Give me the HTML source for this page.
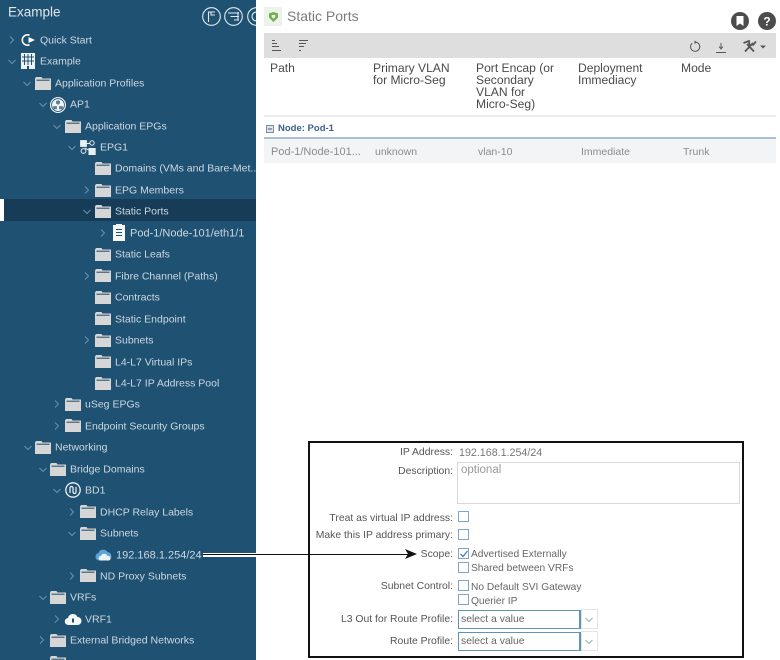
<!DOCTYPE html>
<html><head><meta charset="utf-8"><style>
html,body{margin:0;padding:0;background:#fff}
#p{position:relative;width:780px;height:660px;overflow:hidden;background:#fff;font-family:"Liberation Sans",sans-serif}
#s{position:absolute;left:0;top:0;width:256px;height:660px;background:#1f5172;overflow:hidden}
.t{position:absolute;color:#ccd8e1;font-size:10.5px;line-height:14px;white-space:nowrap;transform:translateY(-6.5px)}
svg{position:absolute;overflow:visible}
.h{position:absolute;font-size:12.1px;line-height:12px;color:#4a4a4a;top:62px;white-space:nowrap}
.c{position:absolute;font-size:10.5px;line-height:12px;color:#8b8b8b;top:145.5px;white-space:nowrap}
.l{position:absolute;right:327px;font-size:10.4px;line-height:12px;color:#555;white-space:nowrap;transform:translateY(-5px)}
.o{position:absolute;left:471px;font-size:10.2px;line-height:12px;color:#666;white-space:nowrap;transform:translateY(-5px)}
.b{position:absolute;left:458px;width:9px;height:9px;border:1px solid #7fa6c8;background:#fff}
.sel{position:absolute;left:458px;width:120px;height:17px;border:1px solid #5f94b5;border-width:1px 2px 1px 1px;font-size:10.4px;line-height:18px;color:#666;text-indent:2px;background:#fff}
.btn{position:absolute;left:581px;width:15px;height:18px;border:1px solid #e4e4e4;background:#fff}
</style></head><body><div id="p">
<svg width="0" height="0" style="position:absolute"><defs>
<symbol id="f" viewBox="0 0 16 13"><path d="M0 1.5 V13 H16 V1.5 H7.5 L6.5 0 H1 Z" fill="#d6d6d6"/><rect x="1.5" y="2.6" width="13" height="1.3" fill="#4a6a82"/></symbol>
<symbol id="r" viewBox="0 0 6 8"><path d="M1 .5 L4.5 4 L1 7.5" fill="none" stroke="#6d91aa" stroke-width="1"/></symbol>
<symbol id="d" viewBox="0 0 8 6"><path d="M.5 1 L4 4.5 L7.5 1" fill="none" stroke="#6d91aa" stroke-width="1"/></symbol>
<symbol id="g" viewBox="0 0 8 6"><path d="M.5 1 L4 4.5 L7.5 1" fill="none" stroke="#8fb0c8" stroke-width="1"/></symbol>
</defs></svg>
<div id="s">
<div style="position:absolute;left:0;top:199px;width:256px;height:22px;background:#163c58"></div>
<div style="position:absolute;left:0;top:199px;width:4px;height:22px;background:#fff"></div>
<div class="t" style="left:8px;top:12px;font-size:13.5px;color:#dfe7ec">Example</div>

<svg style="left:202px;top:7px" width="54" height="19" viewBox="0 0 54 19" fill="none" stroke="#e4ebef" stroke-width="1.1"><circle cx="9.5" cy="9.5" r="8.8"/><path d="M6.5 15 V5 H13 M9 5 V8 H13"/><circle cx="31.5" cy="9.5" r="8.8"/><path d="M26 6 H37 M28.5 9.5 H37 M32 13 H37 M36 5V13"/><circle cx="54.5" cy="9.5" r="8.8"/><circle cx="54.5" cy="9.5" r="4.5"/></svg>

<svg style="left:9px;top:36px" width="6" height="8"><use href="#r"/></svg>
<svg style="left:20px;top:33px" width="16" height="14" viewBox="0 0 16 14"><path d="M9.5 2.2 A5.2 5.2 0 1 0 9.5 11.8" fill="none" stroke="#fff" stroke-width="1.6"/><path d="M8.5 4 L15 7 L8.5 10 Z" fill="#fff"/></svg>
<div class="t" style="left:40px;top:40px">Quick Start</div>

<svg style="left:8px;top:59px" width="8" height="6"><use href="#d"/></svg>
<svg style="left:21px;top:53px" width="14" height="16" viewBox="0 0 14 16"><path d="M0 0H14V16H8V13H6V16H0Z" fill="#eef2f4"/><path d="M3.5 1V12M7 1V12M10.5 1V12M1 4H13M1 8H13" stroke="#1f5172" stroke-width="1"/></svg>
<div class="t" style="left:40px;top:61px">Example</div>

<svg style="left:23px;top:81px" width="8" height="6"><use href="#d"/></svg>
<svg style="left:35px;top:77px" width="16" height="13"><use href="#f"/></svg>
<div class="t" style="left:55px;top:83px">Application Profiles</div>

<svg style="left:39px;top:102px" width="8" height="6"><use href="#d"/></svg>
<svg style="left:50px;top:97px" width="16" height="16" viewBox="0 0 15 15"><circle cx="7.5" cy="7.5" r="7.5" fill="#f1f4f6"/><circle cx="7.5" cy="7.5" r="6" fill="none" stroke="#1f5172" stroke-width=".8"/><circle cx="7.5" cy="5" r="2" fill="#5e7d96"/><path d="M3 11.5H6.5V8.5H3ZM8.5 11.5H12V8.5H8.5Z" fill="#5e7d96"/></svg>
<div class="t" style="left:70px;top:104px">AP1</div>

<svg style="left:53px;top:124px" width="8" height="6"><use href="#d"/></svg>
<svg style="left:65px;top:120px" width="16" height="13"><use href="#f"/></svg>
<div class="t" style="left:85px;top:126px">Application EPGs</div>

<svg style="left:68px;top:145px" width="8" height="6"><use href="#d"/></svg>
<svg style="left:80px;top:140px" width="16" height="15" viewBox="0 0 16 15" fill="none" stroke="#e9eef1" stroke-width="1"><rect x=".6" y=".6" width="5.8" height="5.8" fill="#e9eef1"/><circle cx="12" cy="3" r="2.2"/><circle cx="3.5" cy="11" r="2.4"/><rect x="9" y="8.5" width="6.2" height="6" fill="#e9eef1"/><path d="M6.5 3.5H10M5 8L8.5 10"/></svg>
<div class="t" style="left:100px;top:147px">EPG1</div>

<svg style="left:95px;top:162px" width="16" height="13"><use href="#f"/></svg>
<div class="t" style="left:115px;top:168px">Domains (VMs and Bare-Met...</div>

<svg style="left:84px;top:186px" width="6" height="8"><use href="#r"/></svg>
<svg style="left:95px;top:184px" width="16" height="13"><use href="#f"/></svg>
<div class="t" style="left:115px;top:190px">EPG Members</div>

<svg style="left:83px;top:209px" width="8" height="6"><use href="#d"/></svg>
<svg style="left:95px;top:205px" width="16" height="13"><use href="#f"/></svg>
<div class="t" style="left:115px;top:211px">Static Ports</div>

<svg style="left:100px;top:229px" width="6" height="8"><use href="#r"/></svg>
<svg style="left:113px;top:224px" width="12" height="17" viewBox="0 0 12 17"><path d="M0 1H3V0H9V1H12V17H0Z" fill="#f4f6f7"/><path d="M3 5.5H9M3 8.5H9M3 11.5H9" stroke="#1f5172" stroke-width="1.1"/></svg>
<div class="t" style="left:130px;top:233px;font-size:11px">Pod-1/Node-101/eth1/1</div>

<svg style="left:95px;top:248px" width="16" height="13"><use href="#f"/></svg>
<div class="t" style="left:115px;top:254px">Static Leafs</div>
<svg style="left:84px;top:272px" width="6" height="8"><use href="#r"/></svg>
<svg style="left:95px;top:269px" width="16" height="13"><use href="#f"/></svg>
<div class="t" style="left:115px;top:275.5px">Fibre Channel (Paths)</div>
<svg style="left:95px;top:291px" width="16" height="13"><use href="#f"/></svg>
<div class="t" style="left:115px;top:297px">Contracts</div>
<svg style="left:95px;top:312px" width="16" height="13"><use href="#f"/></svg>
<div class="t" style="left:115px;top:318.5px">Static Endpoint</div>
<svg style="left:84px;top:336px" width="6" height="8"><use href="#r"/></svg>
<svg style="left:95px;top:334px" width="16" height="13"><use href="#f"/></svg>
<div class="t" style="left:115px;top:340px">Subnets</div>
<svg style="left:95px;top:355px" width="16" height="13"><use href="#f"/></svg>
<div class="t" style="left:115px;top:361.5px">L4-L7 Virtual IPs</div>
<svg style="left:95px;top:377px" width="16" height="13"><use href="#f"/></svg>
<div class="t" style="left:115px;top:383px">L4-L7 IP Address Pool</div>

<svg style="left:54px;top:400px" width="6" height="8"><use href="#r"/></svg>
<svg style="left:65px;top:398px" width="16" height="13"><use href="#f"/></svg>
<div class="t" style="left:85px;top:404px">uSeg EPGs</div>
<svg style="left:54px;top:422px" width="6" height="8"><use href="#r"/></svg>
<svg style="left:65px;top:419px" width="16" height="13"><use href="#f"/></svg>
<div class="t" style="left:85px;top:426px">Endpoint Security Groups</div>

<svg style="left:24px;top:445px" width="8" height="6"><use href="#d"/></svg>
<svg style="left:35px;top:441px" width="16" height="13"><use href="#f"/></svg>
<div class="t" style="left:55px;top:447px">Networking</div>
<svg style="left:39px;top:467px" width="8" height="6"><use href="#d"/></svg>
<svg style="left:50px;top:463px" width="16" height="13"><use href="#f"/></svg>
<div class="t" style="left:70px;top:469px">Bridge Domains</div>
<svg style="left:53px;top:488px" width="8" height="6"><use href="#d"/></svg>
<svg style="left:65px;top:482px" width="16" height="16" viewBox="0 0 16 16" fill="none" stroke="#f1f4f6"><circle cx="8" cy="8" r="7.2" stroke-width="1.3"/><path d="M5 11V6A1.5 1.5 0 0 1 8 6V10A1.5 1.5 0 0 0 11 10V5" stroke-width="1.2"/></svg>
<div class="t" style="left:85px;top:490px">BD1</div>
<svg style="left:69px;top:508px" width="6" height="8"><use href="#r"/></svg>
<svg style="left:80px;top:505px" width="16" height="13"><use href="#f"/></svg>
<div class="t" style="left:100px;top:511.5px">DHCP Relay Labels</div>
<svg style="left:68px;top:531px" width="8" height="6"><use href="#d"/></svg>
<svg style="left:80px;top:527px" width="16" height="13"><use href="#f"/></svg>
<div class="t" style="left:100px;top:533px">Subnets</div>
<svg style="left:95px;top:548px" width="17" height="13" viewBox="0 0 17 13"><path d="M4 12.5A3.8 3.8 0 0 1 3.5 5 A5 5 0 0 1 12.5 4 A4.3 4.3 0 0 1 13 12.5Z" fill="#5ba4d8"/><path d="M5 12.5A2.5 2.5 0 0 1 6 7.8A3.5 3.5 0 0 1 12.5 8A2.3 2.3 0 0 1 14 12.5Z" fill="#eaf2f8"/></svg>
<div class="t" style="left:116px;top:554.5px;font-size:11px">192.168.1.254/24</div>
<svg style="left:69px;top:572px" width="6" height="8"><use href="#r"/></svg>
<svg style="left:80px;top:569px" width="16" height="13"><use href="#f"/></svg>
<div class="t" style="left:100px;top:576px">ND Proxy Subnets</div>
<svg style="left:39px;top:595px" width="8" height="6"><use href="#d"/></svg>
<svg style="left:50px;top:591px" width="16" height="13"><use href="#f"/></svg>
<div class="t" style="left:70px;top:597px">VRFs</div>
<svg style="left:54px;top:615px" width="6" height="8"><use href="#r"/></svg>
<svg style="left:65px;top:613px" width="16" height="12" viewBox="0 0 16 12"><path d="M3.5 12A3.5 3.5 0 0 1 3 5A5 5 0 0 1 12.5 4A4 4 0 0 1 12.5 12Z" fill="#f4f6f7"/><rect x="7" y="5.5" width="2" height="4" fill="#1f5172"/></svg>
<div class="t" style="left:85px;top:619px">VRF1</div>
<svg style="left:39px;top:636px" width="6" height="8"><use href="#r"/></svg>
<svg style="left:50px;top:634px" width="16" height="13"><use href="#f"/></svg>
<div class="t" style="left:70px;top:640px">External Bridged Networks</div>
<svg style="left:50px;top:656px" width="16" height="13"><use href="#f"/></svg>
</div>

<div style="position:absolute;left:264px;top:7px;width:18px;height:19px;background:#edf3ea"></div>
<svg style="left:269px;top:12px" width="9" height="10" viewBox="0 0 10 11"><path d="M0 1.5 L5 0 L10 1.5 V6 L5 11 L0 6Z" fill="#6fb04a"/><path d="M3 3.2H7V5.5L5 7.5L3 5.5Z" fill="#eef5e8"/></svg>
<div style="position:absolute;left:287px;top:8px;font-size:14px;line-height:17px;color:#7c7c7c">Static Ports</div>
<svg style="left:731px;top:12px" width="18" height="18" viewBox="0 0 18 18"><circle cx="9" cy="9" r="9" fill="#4c4c4c"/><path d="M5.5 4H12.5V14L9 11.5L5.5 14Z" fill="#fff"/></svg>
<svg style="left:758px;top:12px" width="18" height="18" viewBox="0 0 18 18"><circle cx="9" cy="9" r="9" fill="#4c4c4c"/><text x="9" y="13.5" text-anchor="middle" font-family="Liberation Sans" font-weight="bold" font-size="12" fill="#fff">?</text></svg>

<div style="position:absolute;left:264px;top:33px;width:512px;height:25px;background:#dedede"></div>
<svg style="left:272px;top:40px" width="36" height="12" viewBox="0 0 36 12" stroke="#555" stroke-width="1" fill="none"><path d="M0 .5H3M0 3.5H5M0 6.5H7M0 10.5H9M27 .5H36M27 3.5H34M27 6.5H32M27 10.5H29"/></svg>
<svg style="left:689px;top:40px" width="80" height="13" viewBox="0 0 80 13" fill="none" stroke="#555"><path d="M7 2.2A4.6 4.6 0 1 1 3.2 3.2"/><path d="M5.5 .5L8 2.3L5.5 4" fill="#555" stroke="none"/><path d="M27 12.5H37M32 3V8M30 6.5L32 9L34 6.5" stroke-width="1"/><path d="M56 11.5L64 3M65 11.5L58 4M54.5 3L60 1L60.5 5.5M67 1.5L63.5 5.5" stroke-width="1.8"/><path d="M71 5.5H77L74 8.5Z" fill="#555" stroke="none"/></svg>

<div class="h" style="left:270px">Path</div>
<div class="h" style="left:373px">Primary VLAN<br>for Micro-Seg</div>
<div class="h" style="left:476px">Port Encap (or<br>Secondary<br>VLAN for<br>Micro-Seg)</div>
<div class="h" style="left:578px">Deployment<br>Immediacy</div>
<div class="h" style="left:681px">Mode</div>
<div style="position:absolute;left:264px;top:115px;width:512px;height:2px;background:#ececec"></div>
<svg style="left:266px;top:125px" width="8" height="8" viewBox="0 0 8 8"><rect x=".5" y=".5" width="7" height="7" fill="#dfe4ea" stroke="#7b8da3"/><path d="M2 4H6" stroke="#44586f"/></svg>
<div style="position:absolute;left:278px;top:123px;font-size:9.5px;line-height:12px;font-weight:bold;color:#3a628f">Node: Pod-1</div>
<div style="position:absolute;left:264px;top:137px;width:512px;height:2px;background:#a9c0d8"></div>
<div style="position:absolute;left:264px;top:139px;width:512px;height:24px;background:#f3f4f6"></div>
<div class="c" style="left:271px;font-size:11px">Pod-1/Node-101...</div>
<div class="c" style="left:375px">unknown</div>
<div class="c" style="left:478px">vlan-10</div>
<div class="c" style="left:581px">Immediate</div>
<div class="c" style="left:683px">Trunk</div>

<div style="position:absolute;left:308px;top:441px;width:432px;height:213px;border:2.5px solid #111;background:#fff"></div>
<div class="l" style="top:452px">IP Address:</div>
<div class="o" style="left:459px;top:452px;color:#777;font-size:10.7px">192.168.1.254/24</div>
<div class="l" style="top:471px">Description:</div>
<div style="position:absolute;left:457px;top:462px;width:281px;height:40px;border:1px solid #d9d9d9;font-size:11.5px;line-height:14px;color:#999;text-indent:3px">optional</div>
<div class="l" style="top:518px">Treat as virtual IP address:</div>
<div class="b" style="top:511px"></div>
<div class="l" style="top:535px">Make this IP address primary:</div>
<div class="b" style="top:529px"></div>
<div class="l" style="top:554px">Scope:</div>
<div class="b" style="top:548px"></div>
<svg style="left:459px;top:549px" width="10" height="10" viewBox="0 0 10 10"><path d="M1.5 5L4 7.5L8.5 2" fill="none" stroke="#4a7fa8" stroke-width="1.3"/></svg>
<div class="o" style="top:554px">Advertised Externally</div>
<div class="b" style="top:562px"></div>
<div class="o" style="top:568px">Shared between VRFs</div>
<div class="l" style="top:586px">Subnet Control:</div>
<div class="b" style="top:580px"></div>
<div class="o" style="top:587px">No Default SVI Gateway</div>
<div class="b" style="top:594px"></div>
<div class="o" style="top:601px">Querier IP</div>
<div class="l" style="top:619px">L3 Out for Route Profile:</div>
<div class="sel" style="top:610px">select a value</div>
<div class="btn" style="top:609px"></div>
<svg style="left:585px;top:617px" width="8" height="6"><use href="#g"/></svg>
<div class="l" style="top:641px">Route Profile:</div>
<div class="sel" style="top:632px">select a value</div>
<div class="btn" style="top:631px"></div>
<svg style="left:585px;top:639px" width="8" height="6"><use href="#g"/></svg>

<div style="position:absolute;left:203px;top:552.5px;width:54px;height:4px;background:#fff"></div>
<div style="position:absolute;left:203px;top:553.7px;width:208px;height:1.6px;background:#111"></div>
<svg style="left:405px;top:549px" width="12" height="10" viewBox="0 0 12 10"><path d="M0 0L12 5L0 10L3 5Z" fill="#111"/></svg>
</div></body></html>
